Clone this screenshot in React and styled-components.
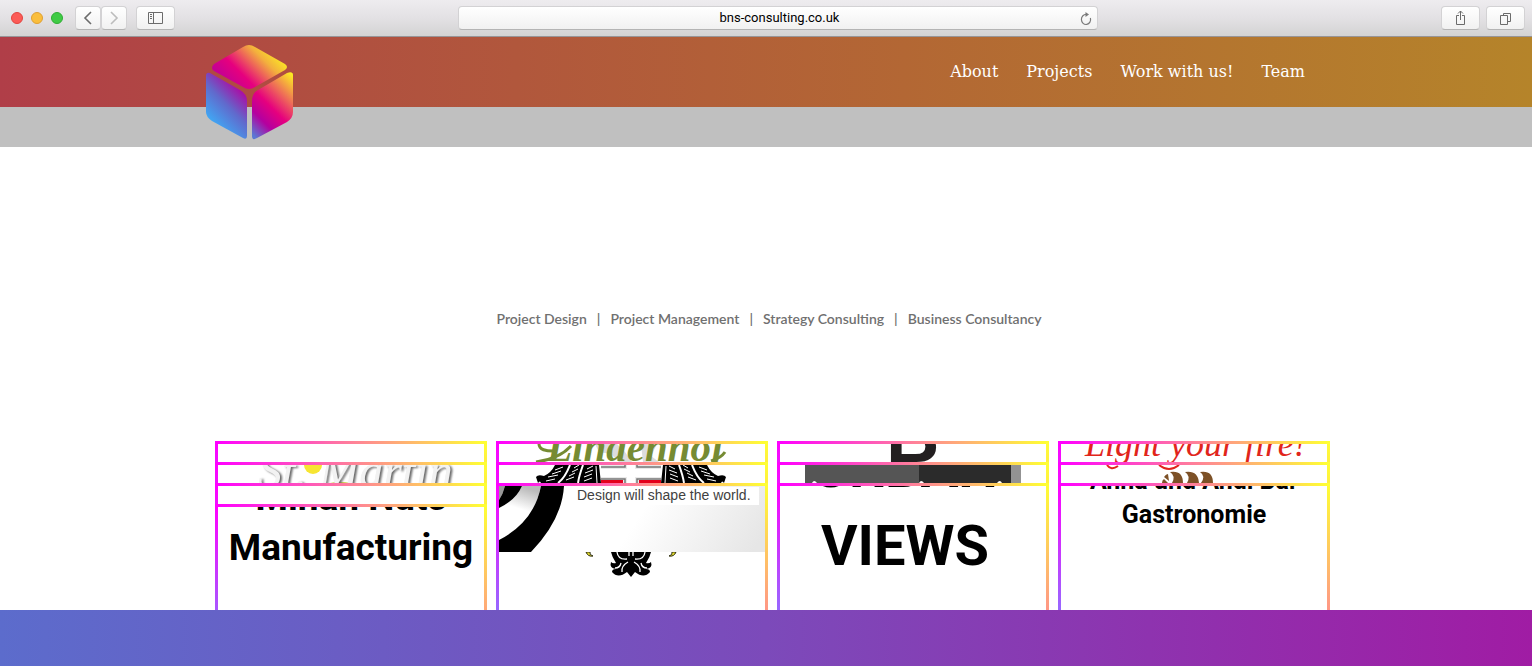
import React from 'react';
import styled, { createGlobalStyle } from 'styled-components';

const GlobalStyle = createGlobalStyle`
  * { box-sizing: border-box; }
  body { margin: 0; background: #fff; font-family: Lato, sans-serif; }
`;

const Page = styled.div`
  display: flex;
  flex-direction: column;
  height: 100vh;
  overflow: hidden;
`;

/* ---------- browser toolbar ---------- */

const Toolbar = styled.div`
  display: grid;
  grid-template-columns: minmax(0, 447fr) minmax(0, 639fr) minmax(0, 427fr);
  align-items: center;
  flex: none;
  height: 37px;
  padding: 0 7px 0 11px;
  background: linear-gradient(#eeecef, #e3e1e4 50%, #d3d3d3);
  border-bottom: 1px solid #979598;
`;

const Group = styled.div`
  display: flex;
  align-items: center;
  gap: ${(p) => p.$gap}px;
  justify-content: ${(p) => (p.$end ? 'flex-end' : 'flex-start')};
`;

const Light = styled.button`
  width: 12px;
  height: 12px;
  padding: 0;
  border: 1px solid ${(p) => p.$edge};
  border-radius: 50%;
  background: ${(p) => p.$fill};
`;

const ToolButton = styled.button`
  display: flex;
  align-items: center;
  justify-content: center;
  width: ${(p) => p.$width}px;
  height: 24px;
  padding: 0;
  color: ${(p) => (p.$muted ? '#bdbdbd' : '#6b6b6b')};
  background: linear-gradient(#fff, #f1f1f1);
  border: 1px solid #d3d2d4;
  border-bottom-color: #b4b4b4;
  border-radius: 4px;
`;

const Address = styled.div`
  display: flex;
  align-items: center;
  height: 24px;
  padding: 0 5px 0 20px;
  background: linear-gradient(#fff, #f1f1f1);
  border: 1px solid #d3d2d4;
  border-bottom-color: #b4b4b4;
  border-radius: 4px;
`;

const AddressInput = styled.input`
  flex: 1;
  min-width: 0;
  padding: 0;
  border: 0;
  outline: 0;
  background: transparent;
  color: #000;
  text-align: center;
  font: 13px/20px Roboto, sans-serif;
`;

const Reload = styled.button`
  display: flex;
  padding: 0;
  border: 0;
  background: transparent;
  color: #7a7a7a;
`;

/* ---------- site header ---------- */

const Header = styled.header`
  flex: none;
  height: 70px;
  background: linear-gradient(to right, #b03e48, #b04f40 21%, #b36734 59%, #b5842a);
`;

const Container = styled.div`
  position: relative;
  width: 100%;
  max-width: 1120px;
  margin: 0 auto;
`;

const LogoLink = styled.a`
  position: absolute;
  top: 7px;
  left: 0;
  z-index: 1;
  display: block;
`;

const Nav = styled.nav`
  display: flex;
  justify-content: flex-end;
  gap: 28px;
  height: 70px;
  padding-right: 21px;
  align-items: center;
`;

const NavLink = styled.a`
  color: #fff;
  text-decoration: none;
  white-space: nowrap;
  font: 16px/20px 'DejaVu Serif', serif;
`;

const Band = styled.div`
  flex: none;
  height: 40px;
  background: #c0c0c0;
`;

/* ---------- content ---------- */

const Main = styled.main`
  flex: 1;
  min-height: 0;
  overflow: hidden;
`;

const Services = styled.ul`
  display: flex;
  justify-content: center;
  margin: 0;
  padding: 160px 0 110px 6px;
  list-style: none;
`;

const Service = styled.li`
  color: #707070;
  font: 600 14px/24px Lato, sans-serif;
  white-space: nowrap;

  & + &::before {
    content: '|';
    margin: 0 10px;
  }
`;

const Columns = styled.div`
  display: grid;
  grid-template-columns: repeat(4, minmax(0, 1fr));
  gap: 9px;
  margin: 0 -4px 0 9px;
`;

const Slice = styled.article`
  height: ${(p) => (p.$open ? '310px' : '21px')};
  overflow: hidden;
`;

const Frame = styled.div`
  height: 310px;
  overflow: hidden;
  background: #fff;
  border: 3px solid;
  border-image: linear-gradient(to top right, #0ff, #f0f, #ff3) 1;
`;

const Art = styled.svg`
  display: block;
  width: 100%;
  height: auto;
`;

const Embossed = styled.g`
  filter: drop-shadow(2px 1px 1px #666);
`;

const Caption = styled.h2`
  margin: ${(p) => p.$pull}px 0 0;
  padding-right: ${(p) => p.$shift || 0}px;
  color: #000;
  text-align: center;
  white-space: nowrap;
  font: bold ${(p) => p.$size}px/${(p) => p.$line}px Roboto, sans-serif;
`;

const Footer = styled.footer`
  flex: none;
  height: 56px;
  background: linear-gradient(to right, #5c6ccc, #7c4aba 50%, #a01ca4);
`;

/* ---------- drawings ---------- */

const Logo = () => (
  <svg width="88" height="96" viewBox="0 0 88 96" aria-hidden="true">
    <defs>
      <linearGradient id="topFace" gradientUnits="userSpaceOnUse" x1="20" y1="44" x2="64" y2="0">
        <stop offset="0" stopColor="#b9009b" />
        <stop offset=".34" stopColor="#e6007e" />
        <stop offset=".75" stopColor="#f3b03d" />
        <stop offset="1" stopColor="#fcee21" />
      </linearGradient>
      <linearGradient id="leftFace" gradientUnits="userSpaceOnUse" x1="4" y1="77" x2="37" y2="44">
        <stop offset="0" stopColor="#3fa9f5" />
        <stop offset=".5" stopColor="#6169cc" />
        <stop offset="1" stopColor="#b5009f" />
      </linearGradient>
      <linearGradient id="rightFace" gradientUnits="userSpaceOnUse" x1="42" y1="86" x2="92" y2="36">
        <stop offset="0" stopColor="#5b78d4" />
        <stop offset=".24" stopColor="#b4009f" />
        <stop offset=".46" stopColor="#e6007e" />
        <stop offset=".75" stopColor="#f08050" />
        <stop offset="1" stopColor="#fcee21" />
      </linearGradient>
    </defs>
    <path fill="url(#topFace)" d="M37 3Q43 -1 49 3L79 20Q83 23 79 26L49 43Q43 47 37 43L8 27Q4 24 8 20Z" />
    <path fill="url(#leftFace)" d="M0 32Q0 28 4 29L34 46Q41 50 41 57V92Q41 96 37 94L6 77Q0 73 0 68Z" />
    <path fill="url(#rightFace)" d="M46 57Q46 49 52 46L81 29Q87 27 87 31V68Q87 74 81 78L51 94Q46 97 46 92Z" />
  </svg>
);

const Chevron = ({ flip }) => (
  <svg width="12" height="14" viewBox="0 0 12 14" fill="none" stroke="currentColor" strokeWidth="1.6">
    <path d={flip ? 'M3 1L9 7L3 13' : 'M9 1L3 7L9 13'} />
  </svg>
);

const SidebarIcon = () => (
  <svg width="15" height="12" viewBox="0 0 15 12" fill="none" stroke="currentColor">
    <path d="M.5.5H14.5V11.5H.5ZM5.5.5V11.5M2 2.5H4M2 4.5H4M2 6.5H4" />
  </svg>
);

const ReloadIcon = () => (
  <svg width="12" height="15" viewBox="0 0 12 15" fill="none" stroke="currentColor" strokeWidth="1.2">
    <path d="M10.4 7A4.6 5 0 1 1 6.5 3.5" />
    <path d="M5.5 1L9 3.6L5.5 6Z" fill="currentColor" stroke="none" />
  </svg>
);

const ShareIcon = () => (
  <svg width="11" height="16" viewBox="0 0 11 16" fill="none" stroke="currentColor">
    <path d="M4 5.5H1.5V14.5H9.5V5.5H7M5.5 10V1M3 3.5L5.5 1L8 3.5" />
  </svg>
);

const TabsIcon = () => (
  <svg width="12" height="13" viewBox="0 0 12 13" fill="none" stroke="currentColor">
    <path d="M1.5 3.5H8.5V12.5H1.5ZM4.5 3.5V1.5H11.5V9.5H8.5" />
  </svg>
);

const StMartinArt = () => (
  <Art viewBox="0 0 266 18">
    <ellipse cx="122" cy="20" rx="14" ry="3" fill="#c3cf3a" />
    <Embossed>
      <text x="40" y="22" fill="#f2f2f2" fontFamily="Liberation Serif, serif" fontStyle="italic" fontSize="48">
        St. Martin
      </text>
    </Embossed>
    <circle cx="95" cy="0" r="9" fill="#f7e532" />
  </Art>
);

const LindenhofArt = () => (
  <Art viewBox="0 0 266 18">
    <path fill="#dcdcde" d="M96 0H118L126 8L133 18H120L112 10L100 8ZM142 0H158L152 12L160 18H144Z" />
    <text x="48" y="17" fill="#768b33" fontFamily="Liberation Serif, serif" fontStyle="italic" fontWeight="bold" fontSize="41">
      Lindenhof
    </text>
    <path fill="none" stroke="#768b33" strokeWidth="3" d="M37 18Q60 15 72 2M40 0Q40 8 58 7M212 17Q222 14 226 8" />
  </Art>
);

const Wing = () => (
  <g>
    <path d="M56 0H100L102 18H42Q41 15 39 18L37 12Q39 9 45 11Q52 8 56 0Z" />
    <path fill="none" stroke="#fff" strokeWidth="2" d="M71 0Q66 13 59 18M84 0Q80 11 79 18" />
    <path
      fill="none"
      stroke="#fff"
      d="M56 5L64 2M53 9L62 6M49 12L59 10M47 16L56 14M75 3L80 0M73 7L79 4M70 11L76 8M67 15L75 12M88 4L94 1M86 8L94 5M85 12L93 9M85 16L93 13M97 1L98 18"
    />
  </g>
);

const CrestArt = () => (
  <Art viewBox="0 0 266 18">
    <Wing />
    <g transform="translate(264 0) scale(-1 1)">
      <Wing />
    </g>
    <path fill="#e9e9e9" d="M102 0H162V18H102Z" />
    <path fill="#e3001b" d="M102 15H124V18H102ZM140 15H162V18H140Z" />
    <path fill="none" stroke="#777" strokeWidth="1.5" d="M102 2H126V0M102 14H126V18M162 2H138V0M162 14H138V18" />
    <path fill="#fff" d="M102 4H128V0H136V4H162V12H136V18H128V12H102Z" />
  </Art>
);

const Curls = () => (
  <g>
    <path d="M112 66H132V91L128 86Q119 93 113 86Q113 83 117 83Q110 82 112 76Q114 78 117 77Q113 71 112 66Z" />
    <path fill="none" stroke="#fff" strokeWidth="1.3" d="M118 66Q119 74 128 73M129 76Q122 80 123 86M116 82Q121 82 122 77M130 66V70" />
    <path fill="#e6df2a" stroke="#2c2c10" d="M87 66Q89 71 94 70Q90 69 91 66Z" />
  </g>
);

const DesignArt = () => (
  <Art viewBox="0 0 266 94">
    <defs>
      <linearGradient id="paper" x1=".6" y1="0" x2="1.1" y2=".08">
        <stop offset="0" stopColor="#fff" />
        <stop offset="1" stopColor="#e6e6e6" />
      </linearGradient>
      <linearGradient id="shade" x1=".5" y1="0" x2=".4" y2=".4">
        <stop offset="0" stopColor="#bbb" />
        <stop offset="1" stopColor="#fff" />
      </linearGradient>
    </defs>
    <Curls />
    <g transform="translate(264 0) scale(-1 1)">
      <Curls />
    </g>
    <path fill="url(#paper)" d="M0 0H266V66H0Z" />
    <path fill="url(#shade)" d="M23 0H42Q35 36 0 54V22Q17 14 23 0Z" />
    <path fill="#999" d="M0 0H6Q4 8 0 14Z" />
    <path d="M6 0H23Q17 14 0 22V14Q4 8 6 0ZM42 0H65Q63 34 32 66H0V54Q35 36 42 0Z" />
    <path fill="#fff" d="M76 1H260V19H76Z" />
    <text x="78" y="14" fill="#414141" fontFamily="Liberation Sans, sans-serif" fontSize="14">
      Design will shape the world.
    </text>
  </Art>
);

const LetterArt = () => (
  <Art viewBox="0 0 266 18">
    <text x="106" y="18" fill="#231f20" fontFamily="Liberation Sans, sans-serif" fontWeight="bold" fontSize="74">
      B
    </text>
  </Art>
);

const SkylineArt = () => (
  <Art viewBox="0 0 266 18">
    <path fill="#555" d="M25 0H139V18H25Z" />
    <path fill="#2b2b2b" d="M139 0H231V18H139Z" />
    <path fill="#939393" d="M231 0H241V18H231Z" />
    <path fill="#fff" d="M32 18Q34 14 37 18ZM139 18Q141 14 144 18ZM217 18Q220 14 222 18Z" />
  </Art>
);

const FireArt = () => (
  <Art viewBox="0 0 266 18">
    <text x="24" y="12" fill="#e1251b" fontFamily="Liberation Serif, serif" fontStyle="italic" fontSize="36">
      Light your fire!
    </text>
  </Art>
);

const BeansArt = () => (
  <Art viewBox="0 0 266 18">
    <path fill="none" stroke="#e1251b" strokeWidth="2" d="M46 0Q50 6 57 1M98 0Q108 8 118 0" />
    <g fill="#7d5127">
      <path d="M101 18Q101 15 103 14L107 18ZM103 12Q105 9 107 9L108 16ZM109 7Q122 5 122 18H111Q115 11 109 7ZM124 7Q137 5 138 18H126Q130 11 124 7ZM139 7Q152 5 152 18H140Q145 11 139 7Z" />
    </g>
  </Art>
);

/* ---------- data ---------- */

const links = ['About', 'Projects', 'Work with us!', 'Team'];
const services = ['Project Design', 'Project Management', 'Strategy Consulting', 'Business Consultancy'];

const columns = [
  [
    null,
    <StMartinArt />,
    null,
    <Caption $size={37} $line={50} $pull={-34}>
      Mihan Nuts
      <br />
      Manufacturing
    </Caption>,
  ],
  [<LindenhofArt />, <CrestArt />, <DesignArt />],
  [
    <LetterArt />,
    <SkylineArt />,
    <Caption $size={56} $line={78} $pull={-57} $shift={16}>
      URBAN
      <br />
      VIEWS
    </Caption>,
  ],
  [
    <FireArt />,
    <BeansArt />,
    <Caption $size={25} $line={34} $pull={-22}>
      Anna und Andi Bar
      <br />
      Gastronomie
    </Caption>,
  ],
];

export default function App() {
  return (
    <Page>
      <GlobalStyle />
      <Toolbar>
        <Group $gap={12}>
          <Group $gap={8}>
            <Light aria-label="Close" $fill="#fc5b57" $edge="#e2443f" />
            <Light aria-label="Minimise" $fill="#fabe3c" $edge="#dfa033" />
            <Light aria-label="Zoom" $fill="#3fcb45" $edge="#2fac34" />
          </Group>
          <Group $gap={9}>
            <Group $gap={0}>
              <ToolButton aria-label="Back" $width={26}>
                <Chevron />
              </ToolButton>
              <ToolButton aria-label="Forward" $width={26} $muted>
                <Chevron flip />
              </ToolButton>
            </Group>
            <ToolButton aria-label="Sidebar" $width={39}>
              <SidebarIcon />
            </ToolButton>
          </Group>
        </Group>
        <Address>
          <AddressInput aria-label="Address" defaultValue="bns-consulting.co.uk" />
          <Reload aria-label="Reload">
            <ReloadIcon />
          </Reload>
        </Address>
        <Group $gap={6} $end>
          <ToolButton aria-label="Share" $width={39}>
            <ShareIcon />
          </ToolButton>
          <ToolButton aria-label="Tabs" $width={39}>
            <TabsIcon />
          </ToolButton>
        </Group>
      </Toolbar>
      <Header>
        <Container>
          <LogoLink href="#home" aria-label="Home">
            <Logo />
          </LogoLink>
          <Nav>
            {links.map((label) => (
              <NavLink key={label} href="#">
                {label}
              </NavLink>
            ))}
          </Nav>
        </Container>
      </Header>
      <Band />
      <Main>
        <Services>
          {services.map((name) => (
            <Service key={name}>{name}</Service>
          ))}
        </Services>
        <Container>
          <Columns>
            {columns.map((cards, c) => (
              <div key={c}>
                {cards.map((content, i) => (
                  <Slice key={i} $open={i === cards.length - 1}>
                    <Frame>{content}</Frame>
                  </Slice>
                ))}
              </div>
            ))}
          </Columns>
        </Container>
      </Main>
      <Footer />
    </Page>
  );
}
